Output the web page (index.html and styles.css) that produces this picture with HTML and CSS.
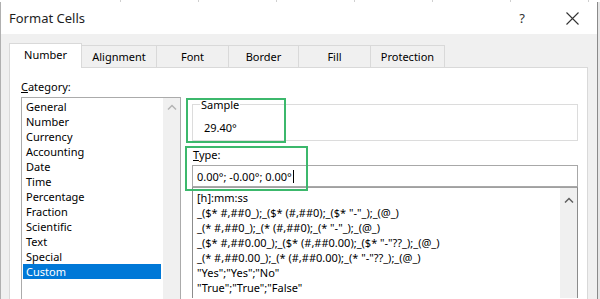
FILE: index.html
```html
<!DOCTYPE html>
<html lang="en">
<head>
    <meta charset="UTF-8">
    <meta name="viewport" content="width=device-width, initial-scale=1.0">
    <title>Format Cells</title>
    <link rel="stylesheet" href="styles.css">
</head>
<body>
    <div class="sheet-grid"></div>
    <div class="dialog">
        <div class="title-bar">
            <span class="title">Format Cells</span>
            <span class="help">?</span>
            <span class="close">
                <svg width="13" height="13" viewBox="0 0 13 13"><path d="M0.5 0.5 L12.5 12.5 M12.5 0.5 L0.5 12.5" stroke="#333" stroke-width="1.1" fill="none"/></svg>
            </span>
        </div>
        <div class="dialog-body">
            <div class="tabs">
                <div class="tab active tab-number">Number</div>
                <div class="tab tab-alignment">Alignment</div>
                <div class="tab tab-font">Font</div>
                <div class="tab tab-border">Border</div>
                <div class="tab tab-fill">Fill</div>
                <div class="tab tab-protection">Protection</div>
            </div>
            <div class="panel">
                <div class="left-col">
                    <div class="label"><u>C</u>ategory:</div>
                    <div class="listbox category-list">
                        <ul class="items">
                            <li>General</li>
                            <li>Number</li>
                            <li>Currency</li>
                            <li>Accounting</li>
                            <li>Date</li>
                            <li>Time</li>
                            <li>Percentage</li>
                            <li>Fraction</li>
                            <li>Scientific</li>
                            <li>Text</li>
                            <li>Special</li>
                            <li class="selected">Custom</li>
                        </ul>
                        <div class="scrollbar disabled">
                            <svg width="10" height="6" viewBox="0 0 10 6"><polyline points="1,5.5 5,1.5 9,5.5" stroke="#b4b4b4" stroke-width="1.5" fill="none"/></svg>
                        </div>
                    </div>
                </div>
                <div class="right-col">
                    <fieldset class="sample">
                        <legend>Sample</legend>
                        <div class="sample-value">29.40°</div>
                    </fieldset>
                    <div class="label type-label"><u>T</u>ype:</div>
                    <div class="type-input">0.00°; -0.00°; 0.00°<span class="caret"></span></div>
                    <div class="listbox format-list">
                        <ul class="items">
                            <li>[h]:mm:ss</li>
                            <li>_($* #,##0_);_($* (#,##0);_($* "-"_);_(@_)</li>
                            <li>_(* #,##0_);_(* (#,##0);_(* "-"_);_(@_)</li>
                            <li>_($* #,##0.00_);_($* (#,##0.00);_($* "-"??_);_(@_)</li>
                            <li>_(* #,##0.00_);_(* (#,##0.00);_(* "-"??_);_(@_)</li>
                            <li>"Yes";"Yes";"No"</li>
                            <li>"True";"True";"False"</li>
                        </ul>
                        <div class="scrollbar">
                            <svg width="10" height="6" viewBox="0 0 10 6"><polyline points="1,5.5 5,1.5 9,5.5" stroke="#606060" stroke-width="1.5" fill="none"/></svg>
                        </div>
                    </div>
                </div>
                <!-- green highlight boxes drawn over the dialog -->
                <div class="mark mark-sample"></div>
                <div class="mark mark-type"></div>
            </div>
        </div>
    </div>
</body>
</html>
```

FILE: styles.css
```css
* {
    box-sizing: border-box;
}
body {
    margin: 0;
    width: 600px;
    height: 299px;
    overflow: hidden;
    background-color: #e6e6e6;
    font-family: "Noto Sans", "Open Sans", sans-serif;
    font-size: 11px;
    color: #000;
}
/* the worksheet grid peeking above the dialog */
.sheet-grid {
    height: 2px;
    background-color: #fff;
    background-image: repeating-linear-gradient(to right, transparent 0, transparent 77px, #d0d0d0 77px, #d0d0d0 78px);
    background-position: 43px 0;
}
.dialog {
    width: 598px;
    height: 297px;
    overflow: hidden;
    border-left: 1px solid #b0b0b0;
    border-right: 1px solid #8a8a8a;
    background-color: #f0f0f0;
}
.title-bar {
    height: 32px;
    background-color: #fff;
    display: flex;
    align-items: center;
    padding-left: 8px;
}
.title {
    font-size: 13px;
    color: #1e1e1e;
    flex: 1;
}
.help {
    font-size: 13px;
    color: #333;
    margin-right: 41px;
}
.close {
    display: flex;
    margin-right: 18px;
}
.dialog-body {
    padding: 9px 9px 0 8px;
}
.tabs {
    display: flex;
    align-items: flex-end;
    height: 25px;
    position: relative;
    z-index: 1;
    margin-bottom: -1px;
}
.tab {
    height: 23px;
    border: 1px solid #d9d9d9;
    border-bottom: none;
    border-right: none;
    display: flex;
    align-items: center;
    justify-content: center;
    padding-bottom: 1px;
    color: #000;
}
.tab.active {
    height: 25px;
    background-color: #fff;
    border-right: 1px solid #d9d9d9;
    padding-bottom: 3px;
}
.tab-number { width: 73px; }
.tab-alignment { width: 74px; border-left: none; }
.tab-font { width: 72px; }
.tab-border { width: 70px; }
.tab-fill { width: 72px; }
.tab-protection { width: 75px; border-right: 1px solid #d9d9d9; }

.panel {
    position: relative;
    width: 579px;
    height: 232px;
    background-color: #fff;
    border: 1px solid #d9d9d9;
    border-bottom: none;
    padding: 11px 0 0 11px;
    display: flex;
    gap: 11px;
}
.left-col {
    width: 160px;
}
.right-col {
    width: 386px;
}
.label {
    line-height: 15px;
    height: 15px;
}
.listbox {
    border: 1px solid #ababab;
    border-bottom: none;
    display: flex;
    overflow: hidden;
}
.items {
    list-style: none;
    margin: 0;
    flex: 1;
    white-space: nowrap;
    overflow: hidden;
}
.items li {
    line-height: 15px;
    height: 15px;
}
.category-list {
    margin-top: 3px;
    height: 202px;
}
.category-list .items {
    padding: 1px 2px 0 1px;
}
.category-list .items li {
    padding-left: 3px;
}
.category-list .items li.selected {
    background-color: #0078d7;
    color: #fff;
}
.scrollbar {
    width: 17px;
    background-color: #f0f0f0;
    display: flex;
    justify-content: center;
    align-items: flex-start;
    padding-top: 6px;
}
.sample {
    margin: 18px 0 0;
    padding: 0 0 5px 7px;
    border: 1px solid #dcdcdc;
    min-width: 0;
}
.sample legend {
    padding: 0 1px;
    line-height: 15px;
}
.sample-value {
    margin-top: 8px;
    padding-left: 4px;
    line-height: 15px;
}
.type-label {
    margin-top: 6px;
    padding-left: 1px;
}
.type-input {
    margin-top: 3px;
    height: 22px;
    border: 1px solid #a8a8a8;
    padding-left: 4px;
    display: flex;
    align-items: center;
}
.caret {
    width: 1px;
    height: 13px;
    background-color: #000;
    margin-left: 1px;
}
.format-list {
    height: 111px;
    border-color: #8c8c8c;
    border-top: 1px solid #a0a0a0;
}
.format-list .items {
    padding: 2px 0 0 4px;
}
.format-list .scrollbar {
    padding-top: 9px;
}
.mark {
    position: absolute;
    border: 2px solid #3cb86c;
}
.mark-sample {
    left: 176px;
    top: 30px;
    width: 100px;
    height: 45px;
}
.mark-type {
    left: 175px;
    top: 78px;
    width: 123px;
    height: 45px;
}
```
